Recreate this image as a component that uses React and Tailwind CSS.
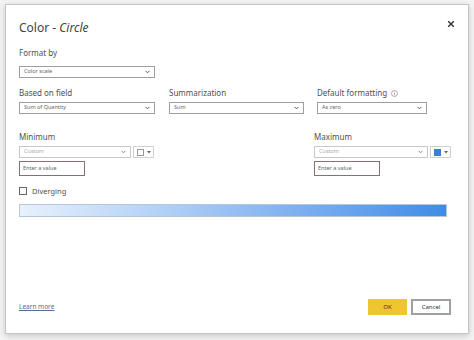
import React from 'react';

const font = { fontFamily: '"Noto Sans", "Open Sans", sans-serif' };

function Chevron({ className = 'text-[#555]' }) {
  return (
    <svg width="5" height="4" viewBox="0 0 5 4" className={className}>
      <path d="M0.6 0.9 L2.5 2.8 L4.4 0.9" fill="none" stroke="currentColor" strokeWidth="1" />
    </svg>
  );
}

function Select({ value, width, muted = false }) {
  return (
    <div
      className={`flex h-[12px] items-center justify-between bg-white pl-[4px] pr-[4px] border ${
        muted ? 'border-[#c8c8c8]' : 'border-[#9e9e9e]'
      }`}
      style={{ width }}
    >
      <span className={`text-[5.5px] leading-none ${muted ? 'text-[#aaa]' : 'text-[#666]'}`}>{value}</span>
      <Chevron className={muted ? 'text-[#888]' : 'text-[#555]'} />
    </div>
  );
}

function ColorButton({ swatch }) {
  return (
    <div className="flex h-[12px] w-[21px] items-center justify-center gap-[3px] border border-[#d0d0d0] bg-white">
      <div className={`h-[7px] w-[7px] ${swatch}`} />
      <svg width="4" height="3" viewBox="0 0 4 3">
        <path d="M0 0 L4 0 L2 2.5 Z" fill="#666" />
      </svg>
    </div>
  );
}

function ValueInput() {
  return (
    <div className="mt-[3px] flex h-[15px] w-[66px] items-center border border-[#8c6e72] bg-white pl-[3px]">
      <span className="text-[5.5px] leading-none text-[#666]">Enter a value</span>
    </div>
  );
}

export default function App() {
  return (
    <div className="h-[340px] w-[474px] overflow-hidden bg-[#f3f3f3] pl-[5px] pt-[4px]" style={font}>
      <div className="flex h-[330px] w-[464px] flex-col border border-[#c4c4c4] bg-white px-[13px] pb-[18px] shadow-[0_2px_6px_rgba(0,0,0,0.18)]">
        {/* HEADER */}
        <div className="flex items-start justify-between pt-[15px]">
          <h1 className="text-[12px] leading-[15px] text-[#444]">
            Color - <span className="italic">Circle</span>
          </h1>
          <svg width="8" height="8" viewBox="0 0 8 8" className="mt-[0px]">
            <path d="M1.2 1.2 L6.8 6.8 M6.8 1.2 L1.2 6.8" stroke="#333" strokeWidth="1.4" />
          </svg>
        </div>

        {/* FORMAT BY */}
        <p className="mt-[12px] text-[8px] leading-[12px] text-[#505050]">Format by</p>
        <div className="mt-[7px]">
          <Select value="Color scale" width={136} />
        </div>

        {/* FIELD ROW */}
        <div className="mt-[9px] grid grid-cols-[136px_135px_110px] gap-x-[14px]">
          <div>
            <p className="text-[8px] leading-[12px] text-[#505050]">Based on field</p>
            <div className="mt-[3px]">
              <Select value="Sum of Quantity" width={136} />
            </div>
          </div>
          <div>
            <p className="text-[8px] leading-[12px] text-[#505050]">Summarization</p>
            <div className="mt-[3px]">
              <Select value="Sum" width={135} />
            </div>
          </div>
          <div className="-ml-[1px]">
            <p className="flex items-center gap-[4px] text-[8px] leading-[12px] text-[#505050]">
              Default formatting
              <svg width="7" height="7" viewBox="0 0 8 8">
                <circle cx="4" cy="4" r="3.4" fill="none" stroke="#888" strokeWidth="0.8" />
                <path d="M4 3.4 V6" stroke="#888" strokeWidth="0.8" />
                <circle cx="4" cy="2.3" r="0.5" fill="#888" />
              </svg>
            </p>
            <div className="mt-[3px]">
              <Select value="As zero" width={110} />
            </div>
          </div>
        </div>

        {/* MIN / MAX */}
        <div className="mt-[17px] flex justify-between pr-[4px]">
          <div>
            <p className="text-[8px] leading-[12px] text-[#505050]">Minimum</p>
            <div className="mt-[3px] flex gap-[2px]">
              <Select value="Custom" width={112} muted />
              <ColorButton swatch="border border-[#999] bg-white" />
            </div>
            <ValueInput />
          </div>
          <div>
            <p className="text-[8px] leading-[12px] text-[#505050]">Maximum</p>
            <div className="mt-[3px] flex gap-[2px]">
              <Select value="Custom" width={114} muted />
              <ColorButton swatch="bg-[#3a7fdc]" />
            </div>
            <ValueInput />
          </div>
        </div>

        {/* DIVERGING */}
        <label className="mt-[10px] flex items-center gap-[5px]">
          <span className="h-[8px] w-[8px] border border-[#666] bg-white" />
          <span className="text-[7.5px] leading-[10px] text-[#505050]">Diverging</span>
        </label>

        <div className="mt-[8px] h-[13px] w-[428px] border border-[#b9c6d6] bg-gradient-to-r from-[#e8f1fc] to-[#3f8ce6]" />

        {/* FOOTER */}
        <div className="mt-auto flex items-center justify-between pr-[4px]">
          <a href="#" className="text-[6.5px] text-[#4f6f98] underline">
            Learn more
          </a>
          <div className="flex gap-[4px]">
            <button className="h-[16px] w-[39px] bg-[#f0c630] text-[6px] text-[#333]">OK</button>
            <button className="h-[16px] w-[40px] border-2 border-[#a0a0a0] bg-white text-[6px] text-[#333]">
              Cancel
            </button>
          </div>
        </div>
      </div>
    </div>
  );
}
